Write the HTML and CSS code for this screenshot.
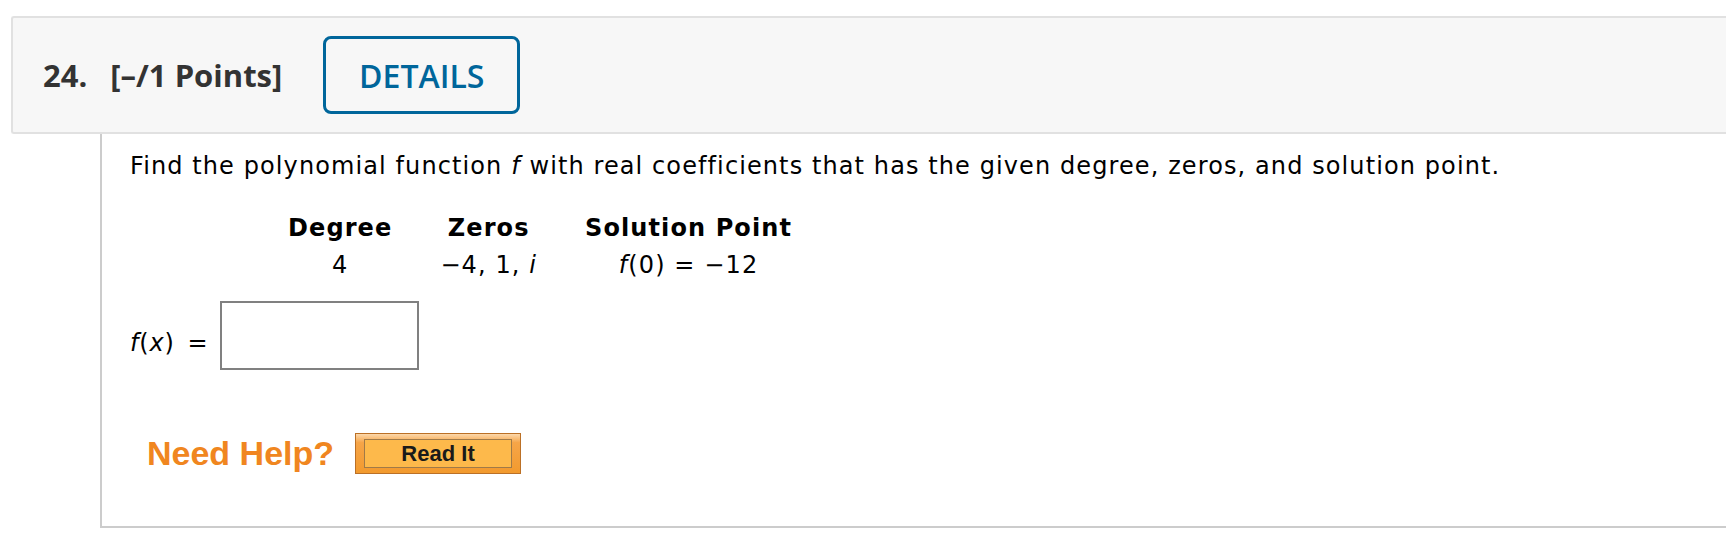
FILE: index.html
```html
<!DOCTYPE html>
<html lang="en">
<head>
<meta charset="utf-8">
<title>Question 24</title>
<link rel="stylesheet" href="styles.css">
</head>
<body>
<div class="question">
  <div class="qhead">
    <span class="num">24.</span>
    <span class="pts">[–/1 Points]</span>
    <button class="details" type="button">DETAILS</button>
  </div>
  <div class="qbody">
    <p class="prompt">Find the polynomial function <i>f</i> with real coefficients that has the given degree, zeros, and solution point.</p>
    <table class="given">
      <tr class="hdr"><th>Degree</th><th>Zeros</th><th>Solution Point</th></tr>
      <tr><td>4</td><td>−4, 1, <i>i</i></td><td><i>f</i>(0) = −12</td></tr>
    </table>
    <div class="answer">
      <span class="fx"><i>f</i>(<i>x</i>)</span><span class="eq">=</span>
      <span class="box"></span>
    </div>
    <div class="help">
      <span class="need">Need Help?</span>
      <span class="readit"><span class="inner">Read It</span></span>
    </div>
  </div>
</div>
</body>
</html>
```

FILE: styles.css
```css
html, body {
  margin: 0;
  padding: 0;
  background: #ffffff;
  overflow: hidden;
}

.question {
  padding-left: 11px;
  padding-top: 16px;
}

.qhead {
  display: flex;
  align-items: center;
  background: #f7f7f7;
  border: 2px solid #e1e1e1;
  border-right: none;
  border-radius: 3px 0 0 3px;
  padding: 18px 0 18px 30px;
  font-family: "Open Sans", sans-serif;
  color: #333333;
}

.num {
  font-size: 31px;
  font-weight: 700;
  margin-right: 23px;
}

.pts {
  font-size: 31px;
  font-weight: 700;
}

.details {
  margin-left: 41px;
  width: 197px;
  height: 78px;
  box-sizing: border-box;
  border: 3px solid #00669b;
  border-radius: 8px;
  background: transparent;
  color: #00669b;
  font-family: "Open Sans", sans-serif;
  font-weight: 600;
  font-size: 32px;
  padding: 0;
}

.qbody {
  margin-left: 89px;
  border-left: 2px solid #cccccc;
  border-bottom: 2px solid #cccccc;
  padding: 17px 0 52px 28px;
  font-family: "DejaVu Sans", Verdana, sans-serif;
  color: #000000;
}

.prompt {
  margin: 0;
  font-size: 24px;
  line-height: 30px;
  letter-spacing: 1.1px;
}

.given {
  margin: 29px 0 0 134px;
  border-collapse: collapse;
  font-size: 24px;
  line-height: 37px;
  letter-spacing: 1.1px;
}

.given th,
.given td {
  padding: 0 24px;
  text-align: center;
  white-space: nowrap;
}

.given th {
  font-weight: 700;
}

.answer {
  display: flex;
  align-items: flex-end;
  margin-top: 17px;
  font-size: 24px;
  line-height: 30px;
  letter-spacing: 0.8px;
}

.fx,
.eq {
  margin-bottom: 12px;
}

.eq {
  margin-left: 13px;
}

.box {
  margin-left: 11px;
  width: 199px;
  height: 69px;
  box-sizing: border-box;
  border: 2px solid #808080;
  background: #ffffff;
}

.help {
  display: flex;
  align-items: center;
  margin-top: 63px;
}

.need {
  margin-left: 17px;
  font-family: "Liberation Sans", Arial, sans-serif;
  font-weight: 700;
  font-size: 34px;
  color: #f08620;
}

.readit {
  margin-left: 21px;
  display: flex;
  align-items: center;
  justify-content: center;
  width: 166px;
  height: 41px;
  box-sizing: border-box;
  border: 1px solid #bb7026;
  background: linear-gradient(#fcd8ab 0%, #f6a548 22%, #f29a2e 100%);
  padding: 5px 8px;
}

.inner {
  flex: 1;
  height: 100%;
  box-sizing: border-box;
  border: 1px solid #a07a48;
  background: #fdb94b;
  display: flex;
  align-items: center;
  justify-content: center;
  font-family: "Liberation Sans", Arial, sans-serif;
  font-weight: 700;
  font-size: 22px;
  color: #1a1a1a;
}
```
